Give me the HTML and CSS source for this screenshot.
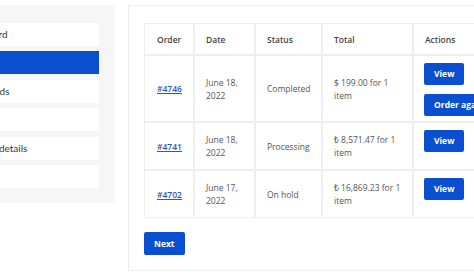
FILE: index.html
```html
<!DOCTYPE html>
<html lang="en">
<head>
<meta charset="utf-8">
<title>My account – Orders</title>
<link rel="stylesheet" href="styles.css">
</head>
<body>
<div class="page">
  <nav class="sidebar">
    <a class="nav-item">Dashboard</a>
    <a class="nav-item active">Orders</a>
    <a class="nav-item">Downloads</a>
    <a class="nav-item">Address</a>
    <a class="nav-item">Account details</a>
    <a class="nav-item">Logout</a>
  </nav>
  <main class="content">
    <table class="orders">
      <colgroup>
        <col class="c-order"><col class="c-date"><col class="c-status"><col class="c-total"><col class="c-actions">
      </colgroup>
      <thead>
        <tr><th>Order</th><th>Date</th><th>Status</th><th>Total</th><th>Actions</th></tr>
      </thead>
      <tbody>
        <tr>
          <td><a class="order-link" href="#">#4746</a></td>
          <td>June 18, 2022</td>
          <td>Completed</td>
          <td>$ 199.00 for 1 item</td>
          <td class="actions"><div class="btns"><a class="btn">View</a><a class="btn">Order again</a></div></td>
        </tr>
        <tr>
          <td><a class="order-link" href="#">#4741</a></td>
          <td>June 18, 2022</td>
          <td>Processing</td>
          <td>₺ 8,571.47 for 1 item</td>
          <td class="actions"><div class="btns"><a class="btn">View</a></div></td>
        </tr>
        <tr>
          <td><a class="order-link" href="#">#4702</a></td>
          <td>June 17, 2022</td>
          <td>On hold</td>
          <td>₺ 16,869.23 for 1 item</td>
          <td class="actions"><div class="btns"><a class="btn">View</a></div></td>
        </tr>
      </tbody>
    </table>
    <a class="btn next">Next</a>
  </main>
</div>
</body>
</html>
```

FILE: styles.css
```css
html, body {
  margin: 0;
  padding: 0;
  background: #ffffff;
  overflow: hidden;
}

.page {
  display: flex;
  align-items: flex-start;
  gap: 13px;
  margin-left: -65px;
  padding-top: 5px;
}

.sidebar {
  width: 180px;
  flex: none;
  box-sizing: border-box;
  background: #f6f6f6;
  padding: 17.7px 16px 15px 16px;
  display: flex;
  flex-direction: column;
  gap: 5.5px;
  font-family: "Lato", "Open Sans", sans-serif;
  font-size: 10px;
  color: #333;
}

.nav-item {
  display: block;
  height: 23px;
  line-height: 23px;
  padding-left: 9px;
  background: #ffffff;
  white-space: nowrap;
}

.nav-item.active {
  background: #0a4fcf;
  color: #ffffff;
}

.content {
  flex: none;
  width: 420px;
  box-sizing: border-box;
  background: #ffffff;
  border: 1px solid #ededed;
  padding: 17px 16px 15px 15px;
  font-family: "Open Sans", "Noto Sans", sans-serif;
  font-size: 8.5px;
  color: #555;
}

.orders {
  table-layout: fixed;
  width: 380px;
  border-collapse: separate;
  border-spacing: 0;
}

.c-order { width: 50px; }
.c-date { width: 61px; }
.c-status { width: 67px; }
.c-total { width: 91px; }
.c-actions { width: 111px; }

.orders th,
.orders td {
  border: 1px solid #eeeeee;
  text-align: left;
  vertical-align: middle;
  line-height: 13px;
  padding: 10px 11px;
}

.orders th {
  padding: 8.5px 11px;
  font-weight: 600;
  color: #444;
}

.orders td:first-child,
.orders th:first-child {
  padding-left: 12px;
}

.order-link {
  color: #2a58c9;
  font-weight: 600;
  text-decoration: underline;
}

.orders td.actions {
  vertical-align: top;
  padding: 7px 10px 5px 10px;
}

.btns {
  display: flex;
  flex-direction: column;
  align-items: flex-start;
  gap: 9px;
}

.btn {
  display: inline-block;
  height: 22px;
  line-height: 22px;
  padding: 0 10px;
  background: #0a4fcf;
  color: #ffffff;
  font-weight: 700;
  border-radius: 2px;
  white-space: nowrap;
}

.next {
  margin-top: 14px;
  height: 23px;
  line-height: 23px;
  padding: 0 10px;
  font-size: 8.5px;
}
```
